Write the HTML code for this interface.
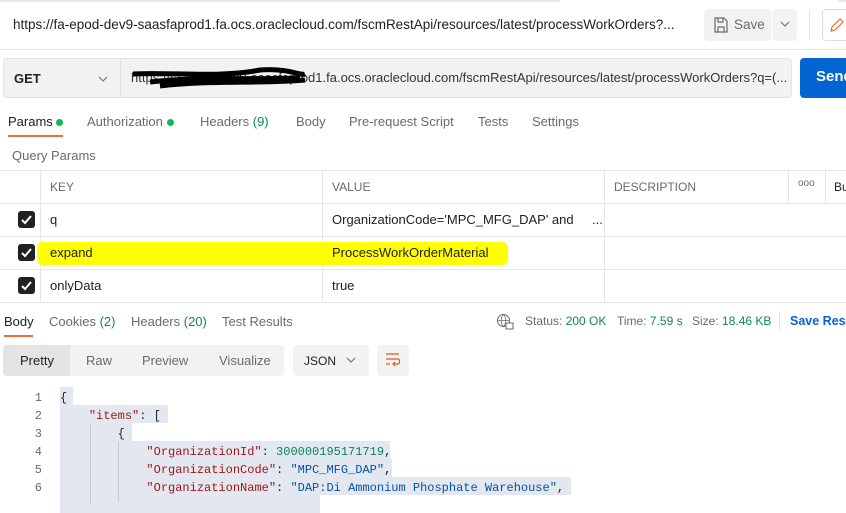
<!DOCTYPE html>
<html><head><style>
*{margin:0;padding:0;box-sizing:border-box}
body{width:846px;height:500px;overflow:hidden;background:#fff;font-family:"Liberation Sans",sans-serif;font-size:13px;color:#212121;position:relative}
.a{position:absolute;white-space:nowrap}
.g{color:#6b6b6b}
.grn{color:#0f8a4a}
.mono{font-family:"Liberation Mono",monospace;font-size:12px}
.vl{position:absolute;background:#e6e6e6;width:1px}
.hl{position:absolute;background:#e6e6e6;height:1px}
.cb{position:absolute;left:18px;width:17px;height:17px;background:#212121;border-radius:3px}
.cb svg{position:absolute;left:2px;top:2px}
.sel{position:absolute;background:#e3e8f0;height:18px}
</style></head><body>
<div class="hl" style="left:0;top:0;width:560px;background:#e8e8e8;height:2px"></div>
<div class="hl" style="left:838px;top:0;width:8px;background:#e8e8e8;height:2px"></div>
<div class="a" style="left:13px;top:17px;font-size:13.5px">https://fa-epod-dev9-saasfaprod1.fa.ocs.oraclecloud.com/fscmRestApi/resources/latest/processWorkOrders?...</div>
<div class="a" style="left:704px;top:9px;width:68px;height:32px;background:#f2f2f2;border-radius:4px"></div>
<svg class="a" style="left:714px;top:17px" width="14" height="16" viewBox="0 0 14 16"><path d="M1 1h9l3 3v11H1z M4 1v4h5V1 M4 15v-5h6v5" fill="none" stroke="#6b6b6b" stroke-width="1.2"/></svg>
<div class="a g" style="left:734px;top:17px;font-size:13.5px">Save</div>
<div class="a" style="left:773px;top:9px;width:24px;height:32px;background:#f2f2f2;border-radius:4px"></div>
<svg class="a" style="left:780px;top:21px" width="10" height="6"><path d="M1 1l4 4 4-4" fill="none" stroke="#6b6b6b"/></svg>
<div class="vl" style="left:809px;top:10px;height:30px"></div>
<div class="a" style="left:822px;top:9px;width:30px;height:32px;border:1px solid #ddd;border-radius:4px"></div>
<svg class="a" style="left:829px;top:17px" width="16" height="16"><path d="M2 14l1-4 8-8 3 3-8 8z" fill="none" stroke="#f26b3a" stroke-width="1.2"/></svg>
<div class="hl" style="left:0;top:49px;width:846px"></div>
<div class="a" style="left:3px;top:58px;width:789px;height:40px;background:#f2f2f2;border:1px solid #e4e4e4;border-radius:4px"></div>
<div class="vl" style="left:120px;top:59px;height:38px;background:#e0e0e0"></div>
<div class="a" style="left:14px;top:71px;font-weight:bold;font-size:13px">GET</div>
<svg class="a" style="left:98px;top:76px" width="10" height="6"><path d="M1 1l4 4 4-4" fill="none" stroke="#6b6b6b"/></svg>
<div class="a" style="left:131px;top:70px;font-size:13px;color:#333">https://fa-epod-dev9-saasfaprod1.fa.ocs.oraclecloud.com/fscmRestApi/resources/latest/processWorkOrders?q=(...</div>
<svg class="a" style="left:130px;top:66px" width="180" height="26"><path d="M3 8 C40 6 90 12 130 4 C160 2 170 10 175 8 M20 16 C70 10 120 14 170 12 M30 20 C80 14 130 18 175 14" stroke="#000" stroke-width="5" fill="none"/></svg>
<div class="a" style="left:800px;top:58px;width:60px;height:40px;background:#0265d2;border-radius:4px;color:#fff;font-weight:bold;font-size:15px;padding:10px 0 0 16px">Send</div>
<div class="a" style="left:8px;top:114px">Params <span style="display:inline-block;width:7px;height:7px;border-radius:50%;background:#0cbb52"></span></div>
<div class="hl" style="left:8px;top:135px;width:55px;height:2px;background:#f26b3a"></div>
<div class="a g" style="left:87px;top:114px">Authorization <span style="display:inline-block;width:7px;height:7px;border-radius:50%;background:#0cbb52"></span></div>
<div class="a g" style="left:200px;top:114px">Headers <span class="grn">(9)</span></div>
<div class="a g" style="left:296px;top:114px">Body</div>
<div class="a g" style="left:349px;top:114px">Pre-request Script</div>
<div class="a g" style="left:478px;top:114px">Tests</div>
<div class="a g" style="left:532px;top:114px">Settings</div>
<div class="a g" style="left:12px;top:148px">Query Params</div>
<div class="hl" style="left:0;top:170px;width:846px"></div>
<div class="hl" style="left:0;top:203px;width:846px"></div>
<div class="hl" style="left:0;top:236px;width:846px"></div>
<div class="hl" style="left:0;top:269px;width:846px"></div>
<div class="hl" style="left:0;top:302px;width:846px"></div>
<div class="vl" style="left:40px;top:170px;height:133px"></div>
<div class="vl" style="left:322px;top:170px;height:133px"></div>
<div class="vl" style="left:604px;top:170px;height:133px"></div>
<div class="vl" style="left:788px;top:170px;height:33px"></div>
<div class="vl" style="left:825px;top:170px;height:33px"></div>
<div class="a g" style="left:50px;top:180px;font-size:12px">KEY</div>
<div class="a g" style="left:332px;top:180px;font-size:12px">VALUE</div>
<div class="a g" style="left:614px;top:180px;font-size:12px">DESCRIPTION</div>
<div class="a g" style="left:798px;top:178px;font-size:10px">ooo</div>
<div class="a" style="left:834px;top:180px;font-size:12px">Bu</div>
<div class="a" style="left:37px;top:242px;width:471px;height:23px;background:#ffff00;border-radius:6px"></div>
<div class="cb" style="top:211px"><svg width="13" height="13"><path d="M2 7l3 3 6-7" fill="none" stroke="#fff" stroke-width="2"/></svg></div>
<div class="cb" style="top:244px"><svg width="13" height="13"><path d="M2 7l3 3 6-7" fill="none" stroke="#fff" stroke-width="2"/></svg></div>
<div class="cb" style="top:277px"><svg width="13" height="13"><path d="M2 7l3 3 6-7" fill="none" stroke="#fff" stroke-width="2"/></svg></div>
<div class="a" style="left:50px;top:212px">q</div>
<div class="a" style="left:332px;top:212px">OrganizationCode='MPC_MFG_DAP' and</div>
<div class="a" style="left:592px;top:212px">...</div>
<div class="a" style="left:50px;top:245px">expand</div>
<div class="a" style="left:332px;top:245px">ProcessWorkOrderMaterial</div>
<div class="a" style="left:50px;top:278px">onlyData</div>
<div class="a" style="left:332px;top:278px">true</div>
<div class="a" style="left:4px;top:314px">Body</div>
<div class="hl" style="left:4px;top:335px;width:29px;height:2px;background:#f26b3a"></div>
<div class="a g" style="left:49px;top:314px">Cookies <span class="grn">(2)</span></div>
<div class="a g" style="left:131px;top:314px">Headers <span class="grn">(20)</span></div>
<div class="a g" style="left:222px;top:314px">Test Results</div>
<svg class="a" style="left:496px;top:313px" width="18" height="18"><circle cx="7.5" cy="7.5" r="6" fill="none" stroke="#6b6b6b"/><path d="M1.5 7.5h12M7.5 1.5c-3 3-3 9 0 12M7.5 1.5c3 3 3 9 0 12" fill="none" stroke="#6b6b6b" stroke-width=".8"/><rect x="10" y="10" width="7" height="6" fill="#fff" stroke="#6b6b6b"/></svg>
<div class="a g" style="left:525px;top:314px;font-size:12px">Status: <span class="grn">200 OK</span></div>
<div class="a g" style="left:617px;top:314px;font-size:12px">Time: <span class="grn">7.59 s</span></div>
<div class="a g" style="left:692px;top:314px;font-size:12px">Size: <span class="grn">18.46 KB</span></div>
<div class="vl" style="left:779px;top:311px;height:20px"></div>
<div class="a" style="left:790px;top:314px;color:#0b5fcf;font-weight:bold;font-size:12.5px">Save Resp</div>
<div class="a" style="left:3px;top:345px;width:281px;height:31px;background:#f2f2f2;border-radius:4px"></div>
<div class="a" style="left:3px;top:345px;width:67px;height:31px;background:#e4e4e4;border-radius:4px 0 0 4px"></div>
<div class="a" style="left:20px;top:353px">Pretty</div>
<div class="a g" style="left:86px;top:353px">Raw</div>
<div class="a g" style="left:142px;top:353px">Preview</div>
<div class="a g" style="left:219px;top:353px">Visualize</div>
<div class="a" style="left:293px;top:345px;width:76px;height:31px;background:#f2f2f2;border-radius:4px"></div>
<div class="a" style="left:304px;top:354px;font-size:12px">JSON</div>
<svg class="a" style="left:346px;top:357px" width="10" height="6"><path d="M1 1l4 4 4-4" fill="none" stroke="#6b6b6b"/></svg>
<div class="a" style="left:377px;top:345px;width:32px;height:31px;background:#f2f2f2;border-radius:4px"></div>
<svg class="a" style="left:385px;top:352px" width="16" height="16"><path d="M1 2h13M1 7h12c2 0 2 5 0 5h-4M10 10l-2 2 2 2M1 12h4" fill="none" stroke="#e05a2b" stroke-width="1.2"/></svg>
<div class="sel" style="left:60px;top:387px;width:13px"></div>
<div class="sel" style="left:60px;top:405px;width:108px"></div>
<div class="sel" style="left:60px;top:423px;width:72px"></div>
<div class="sel" style="left:60px;top:441px;width:330px"></div>
<div class="sel" style="left:60px;top:459px;width:332px"></div>
<div class="sel" style="left:60px;top:477px;width:511px"></div>
<div class="sel" style="left:60px;top:495px;width:260px"></div>
<div class="vl" style="left:90px;top:423px;height:80px;background:#c8c8c8"></div>
<div class="vl" style="left:118px;top:441px;height:60px;background:#c8c8c8"></div>
<div class="a mono g" style="left:32px;top:389px;line-height:18px;text-align:right;width:10px">1<br>2<br>3<br>4<br>5<br>6</div>
<div class="a mono" style="left:60px;top:389px;line-height:18px">{<br>&nbsp;&nbsp;&nbsp;&nbsp;<span style="color:#a31515">"items"</span>: [<br>&nbsp;&nbsp;&nbsp;&nbsp;&nbsp;&nbsp;&nbsp;&nbsp;{<br>&nbsp;&nbsp;&nbsp;&nbsp;&nbsp;&nbsp;&nbsp;&nbsp;&nbsp;&nbsp;&nbsp;&nbsp;<span style="color:#a31515">"OrganizationId"</span>: <span style="color:#098658">300000195171719</span>,<br>&nbsp;&nbsp;&nbsp;&nbsp;&nbsp;&nbsp;&nbsp;&nbsp;&nbsp;&nbsp;&nbsp;&nbsp;<span style="color:#a31515">"OrganizationCode"</span>: <span style="color:#0451a5">"MPC_MFG_DAP"</span>,<br>&nbsp;&nbsp;&nbsp;&nbsp;&nbsp;&nbsp;&nbsp;&nbsp;&nbsp;&nbsp;&nbsp;&nbsp;<span style="color:#a31515">"OrganizationName"</span>: <span style="color:#0451a5">"DAP:Di Ammonium Phosphate Warehouse"</span>,</div>
</body></html>
